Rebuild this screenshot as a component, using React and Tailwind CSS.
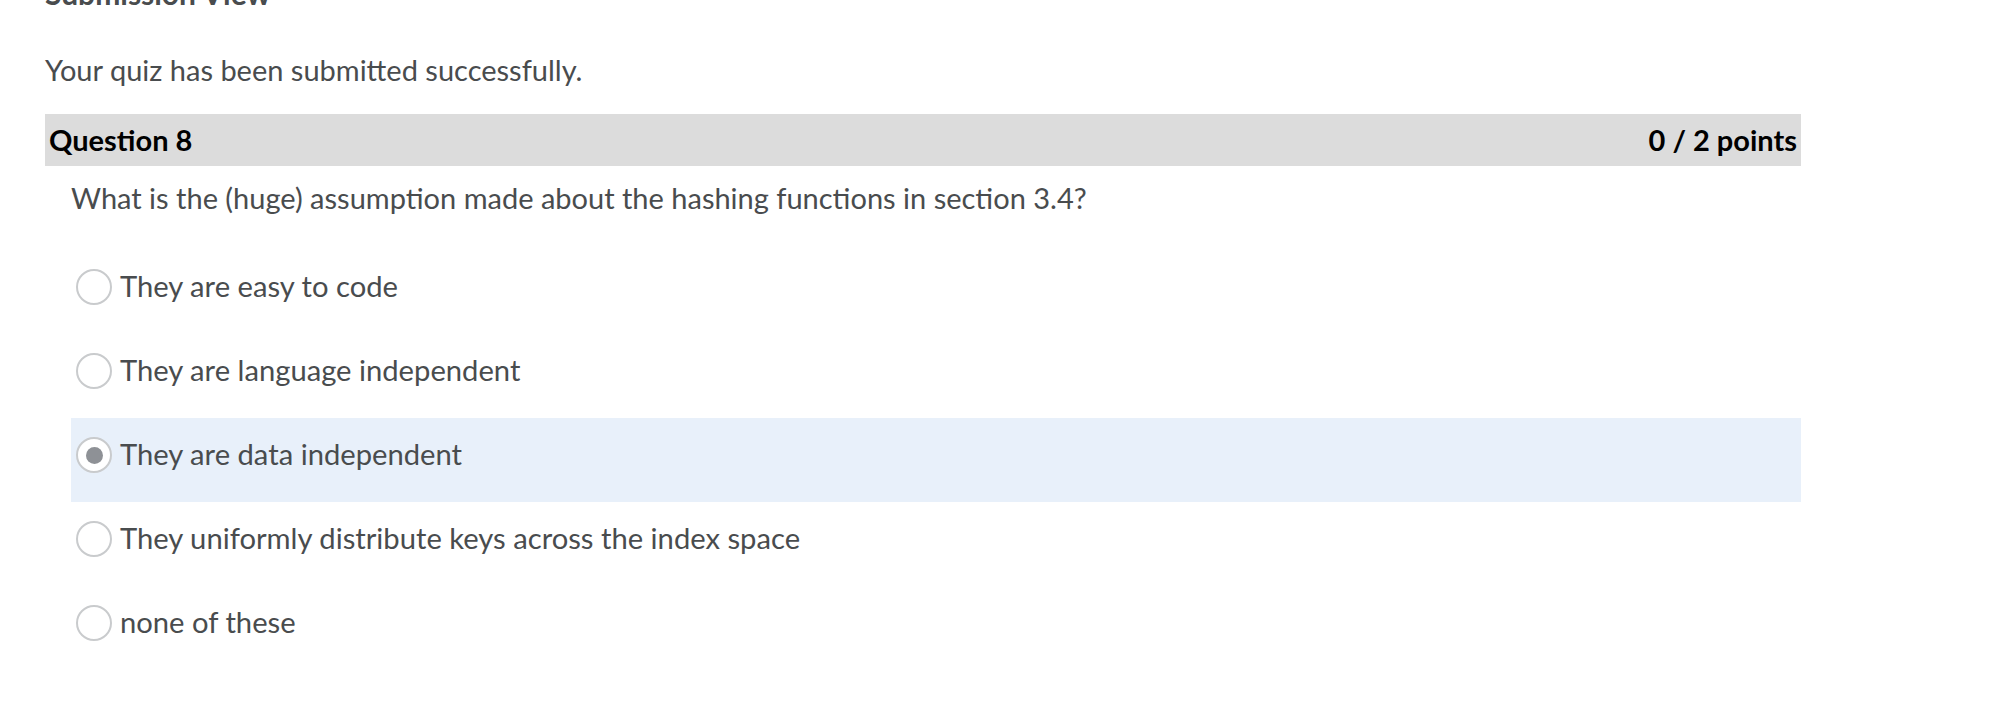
import React from "react";

const options = [
  { text: "They are easy to code", selected: false },
  { text: "They are language independent", selected: false },
  { text: "They are data independent", selected: true },
  { text: "They uniformly distribute keys across the index space", selected: false },
  { text: "none of these", selected: false },
];

const Radio = ({ selected }) => (
  <span className="w-[36px] h-[36px] shrink-0 rounded-full border-2 border-[#c9cbcd] bg-white flex items-center justify-center">
    {selected && <span className="w-[17px] h-[17px] rounded-full bg-[#8e9196]"></span>}
  </span>
);

export default function App() {
  return (
    <div
      className="min-h-screen bg-white overflow-hidden text-[#494c4e]"
      style={{ fontFamily: "Lato, 'Noto Sans', sans-serif" }}
    >
      <div className="w-[1756px] ml-[45px]">
        {/* page title, scrolled mostly out of view */}
        <h1 className="mt-[-22px] text-[30px] leading-[30px] font-bold text-[#494c4e]">
          Submission View
        </h1>

        <p className="mt-[42px] text-[29px] leading-[40px]">
          Your quiz has been submitted successfully.
        </p>

        {/* question header */}
        <div className="mt-[24px] h-[52px] bg-[#dcdcdc] flex items-center justify-between px-[4px] text-black font-bold text-[29px]">
          <span>Question 8</span>
          <span>0 / 2 points</span>
        </div>

        <div className="pl-[26px]">
          <p className="mt-[12px] text-[29px] leading-[40px]">
            What is the (huge) assumption made about the hashing functions in section 3.4?
          </p>

          <div className="mt-[32px]">
            {options.map((o) => (
              <div
                key={o.text}
                className={`h-[84px] pt-[19px] pl-[5px] flex items-start gap-[8px] ${
                  o.selected ? "bg-[#e8f0fa]" : ""
                }`}
              >
                <Radio selected={o.selected} />
                <span className="text-[29.2px] leading-[33px]">{o.text}</span>
              </div>
            ))}
          </div>
        </div>
      </div>
    </div>
  );
}
